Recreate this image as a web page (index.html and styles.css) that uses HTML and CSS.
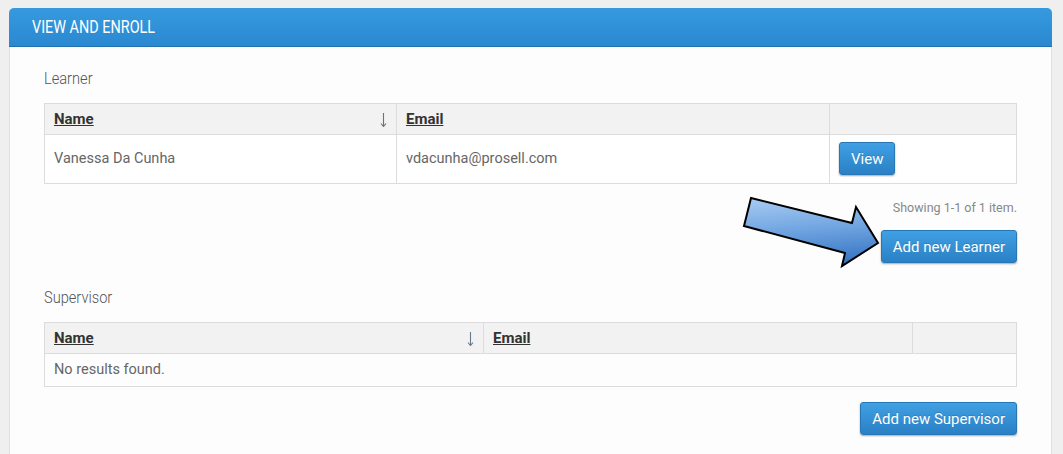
FILE: index.html
```html
<!DOCTYPE html>
<html>
<head>
<meta charset="utf-8">
<title>View and Enroll</title>
<link rel="stylesheet" href="styles.css">
</head>
<body>
<div class="panel">
  <div class="panel-heading"><span class="panel-title">VIEW AND ENROLL</span></div>
  <div class="panel-body">
    <h4 class="section-title"><span>Learner</span></h4>
    <table class="grid learner">
      <colgroup><col class="c1"><col class="c2"><col></colgroup>
      <thead>
        <tr>
          <th><svg class="sort sort-brown" viewBox="0 0 7 14" width="7" height="14"><path d="M3.5 0V13M1 10.5L3.5 13.5L6 10.5" fill="none" stroke="currentColor" stroke-width="1.1"/></svg><a class="sort-link">Name</a></th>
          <th><a class="sort-link">Email</a></th>
          <th></th>
        </tr>
      </thead>
      <tbody>
        <tr>
          <td>Vanessa Da Cunha</td>
          <td>vdacunha@prosell.com</td>
          <td class="action"><button class="btn">View</button></td>
        </tr>
      </tbody>
    </table>
    <div class="summary">Showing 1-1 of 1 item.</div>
    <div class="actions actions-learner"><button class="btn">Add new Learner</button></div>

    <h4 class="section-title section-second"><span>Supervisor</span></h4>
    <table class="grid supervisor">
      <colgroup><col class="c1"><col class="c2"><col></colgroup>
      <thead>
        <tr>
          <th><svg class="sort sort-blue" viewBox="0 0 7 14" width="7" height="14"><path d="M3.5 0V13M1 10.5L3.5 13.5L6 10.5" fill="none" stroke="currentColor" stroke-width="1.1"/></svg><a class="sort-link">Name</a></th>
          <th><a class="sort-link">Email</a></th>
          <th></th>
        </tr>
      </thead>
      <tbody>
        <tr><td class="empty" colspan="3">No results found.</td></tr>
      </tbody>
    </table>
    <div class="actions actions-supervisor"><button class="btn">Add new Supervisor</button></div>
  </div>
</div>

<svg class="callout" width="145" height="78" viewBox="0 0 145 78">
  <defs>
    <linearGradient id="arrowFill" x1="0" y1="0" x2="0.15" y2="1">
      <stop offset="0" stop-color="#a9ccf2"/>
      <stop offset="0.5" stop-color="#72a6e2"/>
      <stop offset="1" stop-color="#3a78c4"/>
    </linearGradient>
  </defs>
  <polygon points="11,4 112,29 116,13 138,49 102,72 105,59 4,32" fill="url(#arrowFill)" stroke="#000" stroke-width="2" stroke-linejoin="miter"/>
</svg>
</body>
</html>
```

FILE: styles.css
```css
html, body {
  margin: 0;
  padding: 0;
}

body {
  background: #efefef;
  font-family: Roboto, "Noto Sans", "Liberation Sans", sans-serif;
  position: relative;
  height: 454px;
  overflow: hidden;
}

.panel {
  margin: 8px 11px 0 9px;
  background: #fdfdfd;
  border-left: 1px solid #e0e0e0;
  border-right: 1px solid #e0e0e0;
  border-radius: 4px 4px 0 0;
}

.panel-heading {
  margin: 0 -1px;
  height: 38px;
  padding-left: 23px;
  background: linear-gradient(#369ade, #2a88d1);
  border-bottom: 1px solid #1f70ae;
  border-radius: 5px 5px 0 0;
  line-height: 38px;
}

.panel-title {
  display: inline-block;
  color: #fff;
  font-size: 18px;
  font-weight: 400;
  transform: scaleX(0.8);
  transform-origin: left center;
}

.panel-body {
  padding: 19px 34px 20px;
}

.section-title {
  margin: 0 0 13px;
  font-size: 17px;
  font-weight: 300;
  line-height: 24px;
  color: #555;
}

.section-title span {
  display: inline-block;
  transform: scaleX(0.86);
  transform-origin: left center;
}

.section-second {
  margin-top: 22px;
}

.grid {
  width: 100%;
  border-collapse: collapse;
  table-layout: fixed;
  border: 1px solid #dcdcdc;
}

.learner .c1 { width: 352px; }
.learner .c2 { width: 433px; }
.supervisor .c1 { width: 439px; }
.supervisor .c2 { width: 429px; }

.grid th {
  background: #f2f2f2;
  border: 1px solid #dcdcdc;
  padding: 5px 9px;
  line-height: 20px;
  text-align: left;
  font-size: 15px;
  font-weight: 700;
}

.sort-link {
  color: #333;
  text-decoration: underline;
}

.sort {
  float: right;
  margin-top: 4px;
}

.sort-brown { color: #7e6c68; }
.sort-blue { color: #667a8c; }

.grid td {
  background: #fff;
  border: 1px solid #dcdcdc;
  padding: 7px 9px 8px;
  line-height: 20px;
  font-size: 14.5px;
  color: #666;
}

.grid td.empty {
  padding: 5px 9px;
  line-height: 22px;
  background: #fdfdfd;
}

.summary {
  margin-top: 15px;
  text-align: right;
  font-size: 12.5px;
  line-height: 17px;
  color: #888;
}

.actions {
  text-align: right;
}

.actions-learner { margin-top: 14px; }
.actions-supervisor { margin-top: 15px; }

.btn {
  height: 33px;
  padding: 0 11px;
  font-family: Roboto, "Noto Sans", sans-serif;
  font-size: 15px;
  color: #fff;
  background: linear-gradient(#40a0e3, #2a80c5);
  border: 1px solid #2776b6;
  border-radius: 3px;
  box-shadow: 0 1px 2px rgba(0, 0, 0, 0.35);
  text-shadow: 0 -1px 0 rgba(0, 0, 0, 0.15);
  vertical-align: middle;
}

.callout {
  position: absolute;
  left: 740px;
  top: 194px;
}
```
